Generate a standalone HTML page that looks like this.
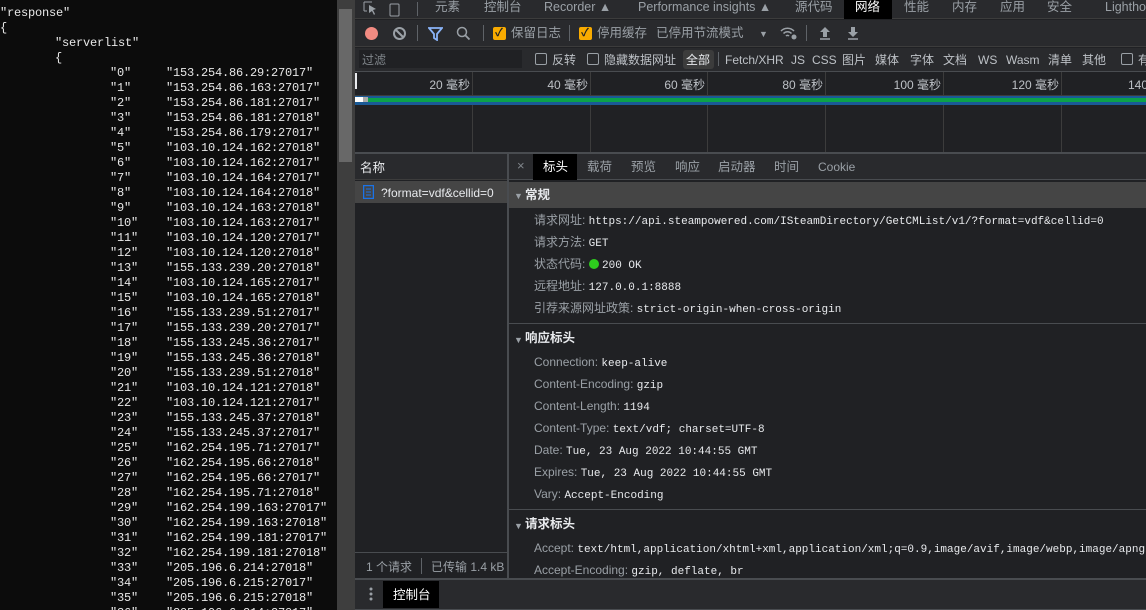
<!DOCTYPE html>
<html><head><meta charset="utf-8"><style>
*{box-sizing:border-box;margin:0;padding:0}
html,body{width:1146px;height:610px;overflow:hidden}
body{background:#202124;font-family:"Liberation Sans","Noto Sans CJK SC",sans-serif;font-size:12px;color:#9aa0a6;position:relative;line-height:16px}
.a{position:absolute;white-space:nowrap;line-height:16px}
#left{position:absolute;left:0;top:0;width:337px;height:610px;overflow:hidden;background:#0c0c0c;color:#e8e8e8;font-family:"Liberation Mono","Noto Sans CJK SC",monospace;font-size:12px;letter-spacing:-0.2px}
#left div{position:absolute;white-space:pre;line-height:15px}
#sb{position:absolute;left:337px;top:0;width:18px;height:610px;background:#3e3e3e}
#thumb{position:absolute;left:339px;top:9px;width:13px;height:153px;background:#686868}
.mono{font-family:"Liberation Mono",monospace;font-size:11px;color:#e8eaed}
.lbl{color:#9aa0a6;font-size:12px}
.tab{position:absolute;top:0;height:19px;line-height:15px;color:#9aa0a6;font-size:12.5px}
.vl{position:absolute;width:1px;background:#3c3c3c}
.cb{position:absolute;width:12px;height:12px;border:1px solid #9aa0a6;border-radius:2px}
.cbo{position:absolute;width:13px;height:13px;background:#f9ab00;border-radius:2px}
.f{position:absolute;top:52px;color:#bdc1c6;white-space:nowrap;line-height:16px}
.dt{position:absolute;top:159px;font-size:12.5px;line-height:16px;white-space:nowrap}
</style></head><body>
<div id="left">
<div style="left:0;top:6px">"response"</div>
<div style="left:0;top:21px">{</div>
<div style="left:55px;top:36px">"serverlist"</div>
<div style="left:55px;top:51px">{</div>
<div style="left:110px;top:66px">"0"     "153.254.86.29:27017"
"1"     "153.254.86.163:27017"
"2"     "153.254.86.181:27017"
"3"     "153.254.86.181:27018"
"4"     "153.254.86.179:27017"
"5"     "103.10.124.162:27018"
"6"     "103.10.124.162:27017"
"7"     "103.10.124.164:27017"
"8"     "103.10.124.164:27018"
"9"     "103.10.124.163:27018"
"10"    "103.10.124.163:27017"
"11"    "103.10.124.120:27017"
"12"    "103.10.124.120:27018"
"13"    "155.133.239.20:27018"
"14"    "103.10.124.165:27017"
"15"    "103.10.124.165:27018"
"16"    "155.133.239.51:27017"
"17"    "155.133.239.20:27017"
"18"    "155.133.245.36:27017"
"19"    "155.133.245.36:27018"
"20"    "155.133.239.51:27018"
"21"    "103.10.124.121:27018"
"22"    "103.10.124.121:27017"
"23"    "155.133.245.37:27018"
"24"    "155.133.245.37:27017"
"25"    "162.254.195.71:27017"
"26"    "162.254.195.66:27018"
"27"    "162.254.195.66:27017"
"28"    "162.254.195.71:27018"
"29"    "162.254.199.163:27017"
"30"    "162.254.199.163:27018"
"31"    "162.254.199.181:27017"
"32"    "162.254.199.181:27018"
"33"    "205.196.6.214:27018"
"34"    "205.196.6.215:27017"
"35"    "205.196.6.215:27018"
"36"    "205.196.6.214:27017"</div>
</div>
<div id="sb"></div><div id="thumb"></div>

<div class="a" style="left:355px;top:0;width:791px;height:19px;background:#292a2d;border-bottom:1px solid #3c3c3c"></div>
<svg class="a" style="left:363px;top:1px" width="40" height="16"><path d="M1 1h8M1 1v9M1 10h3" stroke="#9aa0a6" fill="none"/><path d="M6 4l7 4-3 1 2 4-1 1-2-4-3 2z" fill="#9aa0a6"/><rect x="27" y="3" width="9" height="12" rx="1" stroke="#9aa0a6" fill="none"/></svg>
<div class="vl" style="left:417px;top:2px;height:14px;background:#5f6368"></div>
<div class="tab" style="left:435px">元素</div>
<div class="tab" style="left:484px">控制台</div>
<div class="tab" style="left:544px">Recorder ▲</div>
<div class="tab" style="left:638px">Performance insights ▲</div>
<div class="tab" style="left:795px">源代码</div>
<div class="a" style="left:844px;top:0;width:48px;height:19px;background:#000"></div>
<div class="tab" style="left:855px;color:#fff">网络</div>
<div class="tab" style="left:904px">性能</div>
<div class="tab" style="left:952px">内存</div>
<div class="tab" style="left:1000px">应用</div>
<div class="tab" style="left:1047px">安全</div>
<div class="tab" style="left:1105px">Lighthouse</div>

<div class="a" style="left:355px;top:20px;width:791px;height:27px;background:#292a2d;border-bottom:1px solid #3c3c3c"></div>
<div class="a" style="left:365px;top:27px;width:13px;height:13px;border-radius:50%;background:#f28b82"></div>
<div class="a" style="left:393px;top:27px;width:13px;height:13px;border-radius:50%;border:2px solid #9aa0a6"></div>
<svg class="a" style="left:393px;top:27px" width="13" height="13"><path d="M3 3l7 7" stroke="#9aa0a6" stroke-width="2"/></svg>
<div class="vl" style="left:417px;top:25px;height:16px;background:#5f6368"></div>
<svg class="a" style="left:428px;top:27px" width="15" height="14"><path d="M1 1h13l-5 6v6l-3-2v-4z" fill="none" stroke="#8ab4f8" stroke-width="1.8"/></svg>
<svg class="a" style="left:456px;top:26px" width="15" height="15"><circle cx="6" cy="6" r="4.5" stroke="#9aa0a6" stroke-width="1.5" fill="none"/><path d="M9.5 9.5l4 4" stroke="#9aa0a6" stroke-width="1.8"/></svg>
<div class="vl" style="left:483px;top:25px;height:16px;background:#5f6368"></div>
<div class="cbo" style="left:493px;top:27px"></div><div class="a" style="left:495px;top:25px;color:#202124;font-size:11px;font-weight:bold">✓</div>
<div class="a" style="left:511px;top:25px;font-size:12.5px">保留日志</div>
<div class="vl" style="left:569px;top:25px;height:16px;background:#5f6368"></div>
<div class="cbo" style="left:579px;top:27px"></div><div class="a" style="left:581px;top:25px;color:#202124;font-size:11px;font-weight:bold">✓</div>
<div class="a" style="left:597px;top:25px;font-size:12.5px">停用缓存</div>
<div class="a" style="left:656px;top:25px;font-size:12.5px">已停用节流模式</div>
<div class="a" style="left:759px;top:26px;font-size:9px">▼</div>
<svg class="a" style="left:779px;top:25px" width="20" height="16"><path d="M2 6a9 9 0 0 1 13 0M4.5 8.5a5.5 5.5 0 0 1 8 0M7 11a2 2 0 0 1 3 0" stroke="#9aa0a6" stroke-width="1.5" fill="none"/><circle cx="15" cy="12" r="2.5" fill="#9aa0a6"/></svg>
<div class="vl" style="left:806px;top:25px;height:16px;background:#5f6368"></div>
<svg class="a" style="left:818px;top:26px" width="14" height="14"><path d="M7 1l5 5H9v5H5V6H2z" fill="#9aa0a6"/><path d="M2 13h10" stroke="#9aa0a6" stroke-width="1.5"/></svg>
<svg class="a" style="left:846px;top:26px" width="14" height="14"><path d="M7 11l5-5H9V1H5v5H2z" fill="#9aa0a6"/><path d="M2 13h10" stroke="#9aa0a6" stroke-width="1.5"/></svg>

<div class="a" style="left:355px;top:48px;width:791px;height:24px;background:#292a2d;border-bottom:1px solid #494c50"></div>
<div class="a" style="left:359px;top:50px;width:163px;height:18px;background:#202124"></div>
<div class="a" style="left:362px;top:52px;color:#80868b">过滤</div>
<div class="cb" style="left:535px;top:53px"></div><div class="f" style="left:552px">反转</div>
<div class="cb" style="left:587px;top:53px"></div><div class="f" style="left:604px">隐藏数据网址</div>
<div class="a" style="left:683px;top:50px;width:31px;height:19px;background:#3c3c3c;border-radius:3px"></div>
<div class="f" style="left:686px;color:#e8eaed">全部</div>
<div class="vl" style="left:718px;top:52px;height:14px;background:#5f6368"></div>
<div class="f" style="left:725px">Fetch/XHR</div>
<div class="f" style="left:791px">JS</div>
<div class="f" style="left:812px">CSS</div>
<div class="f" style="left:842px">图片</div>
<div class="f" style="left:875px">媒体</div>
<div class="f" style="left:910px">字体</div>
<div class="f" style="left:943px">文档</div>
<div class="f" style="left:978px">WS</div>
<div class="f" style="left:1006px">Wasm</div>
<div class="f" style="left:1048px">清单</div>
<div class="f" style="left:1082px">其他</div>
<div class="cb" style="left:1121px;top:53px"></div><div class="f" style="left:1138px">有</div>

<div class="a" style="left:355px;top:72px;width:791px;height:24px;border-bottom:1px solid #3c3c3c"></div>
<div class="a" style="left:355px;top:73px;width:2px;height:16px;background:#e8eaed"></div>
<div class="vl" style="left:472px;top:72px;height:81px"></div>
<div class="vl" style="left:590px;top:72px;height:81px"></div>
<div class="vl" style="left:707px;top:72px;height:81px"></div>
<div class="vl" style="left:825px;top:72px;height:81px"></div>
<div class="vl" style="left:943px;top:72px;height:81px"></div>
<div class="vl" style="left:1061px;top:72px;height:81px"></div>
<div class="a" style="left:420px;top:77px;width:50px;text-align:right;color:#bdc1c6">20 毫秒</div>
<div class="a" style="left:538px;top:77px;width:50px;text-align:right;color:#bdc1c6">40 毫秒</div>
<div class="a" style="left:655px;top:77px;width:50px;text-align:right;color:#bdc1c6">60 毫秒</div>
<div class="a" style="left:773px;top:77px;width:50px;text-align:right;color:#bdc1c6">80 毫秒</div>
<div class="a" style="left:885px;top:77px;width:56px;text-align:right;color:#bdc1c6">100 毫秒</div>
<div class="a" style="left:1003px;top:77px;width:56px;text-align:right;color:#bdc1c6">120 毫秒</div>
<div class="a" style="left:1128px;top:77px;color:#bdc1c6">140</div>
<div class="a" style="left:355px;top:96px;width:791px;height:9px;background:#1a5a96"></div>
<div class="a" style="left:355px;top:98px;width:791px;height:4px;background:#0ca14a"></div>
<div class="a" style="left:355px;top:97px;width:13px;height:5px;background:#aaa"></div>
<div class="a" style="left:355px;top:97px;width:8px;height:5px;background:#fff"></div>
<div class="a" style="left:355px;top:152px;width:791px;height:2px;background:#494c50"></div>

<div class="a" style="left:355px;top:154px;width:153px;height:26px;background:#292a2d;border-bottom:1px solid #3c3c3c"></div>
<div class="a" style="left:360px;top:160px;color:#e8eaed;font-size:12.5px">名称</div>
<div class="a" style="left:355px;top:181px;width:152px;height:22px;background:#454545"></div>
<svg class="a" style="left:363px;top:185px" width="11" height="14"><rect x="0.5" y="0.5" width="10" height="13" fill="none" stroke="#1a73e8" stroke-width="1.5"/><path d="M3 4h5M3 7h5M3 10h5" stroke="#1a73e8"/></svg>
<div class="a" style="left:381px;top:185px;color:#e8eaed">?format=vdf&amp;cellid=0</div>
<div class="a" style="left:507px;top:154px;width:2px;height:424px;background:#494c50"></div>
<div class="a" style="left:355px;top:552px;width:153px;height:1px;background:#494c50"></div>
<div class="a" style="left:366px;top:559px;color:#9aa0a6">1 个请求</div>
<div class="vl" style="left:421px;top:558px;height:16px;background:#5f6368"></div>
<div class="a" style="left:431px;top:559px;color:#9aa0a6">已传输 1.4 kB</div>

<div class="a" style="left:509px;top:154px;width:637px;height:26px;background:#292a2d;border-bottom:1px solid #494c50"></div>
<div class="a" style="left:517px;top:158px;color:#80868b;font-size:13px">×</div>
<div class="a" style="left:533px;top:154px;width:44px;height:26px;background:#000"></div>
<div class="dt" style="left:543px;color:#fff">标头</div>
<div class="dt" style="left:587px">载荷</div>
<div class="dt" style="left:631px">预览</div>
<div class="dt" style="left:675px">响应</div>
<div class="dt" style="left:718px">启动器</div>
<div class="dt" style="left:774px">时间</div>
<div class="dt" style="left:818px;font-size:12px">Cookie</div>

<div class="a" style="left:509px;top:182px;width:637px;height:26px;background:#454545"></div>
<div class="a" style="left:514px;top:188px;color:#9aa0a6;font-size:9px">▼</div>
<div class="a" style="left:525px;top:187px;color:#e8eaed;font-weight:bold;font-size:12.5px">常规</div>
<div class="a" style="left:534px;top:212px"><span class="lbl">请求网址: </span><span class="mono">https://api.steampowered.com/ISteamDirectory/GetCMList/v1/?format=vdf&amp;cellid=0</span></div>
<div class="a" style="left:534px;top:234px"><span class="lbl">请求方法: </span><span class="mono">GET</span></div>
<div class="a" style="left:534px;top:256px"><span class="lbl">状态代码: </span><span style="display:inline-block;width:10px;height:10px;border-radius:50%;background:#2ecc1e;vertical-align:-1px"></span> <span class="mono">200 OK</span></div>
<div class="a" style="left:534px;top:278px"><span class="lbl">远程地址: </span><span class="mono">127.0.0.1:8888</span></div>
<div class="a" style="left:534px;top:300px"><span class="lbl">引荐来源网址政策: </span><span class="mono">strict-origin-when-cross-origin</span></div>
<div class="a" style="left:509px;top:323px;width:637px;height:1px;background:#494c50"></div>

<div class="a" style="left:514px;top:332px;font-size:9px">▼</div>
<div class="a" style="left:525px;top:330px;color:#e8eaed;font-weight:bold;font-size:12.5px">响应标头</div>
<div class="a" style="left:534px;top:354px"><span class="lbl">Connection: </span><span class="mono">keep-alive</span></div>
<div class="a" style="left:534px;top:376px"><span class="lbl">Content-Encoding: </span><span class="mono">gzip</span></div>
<div class="a" style="left:534px;top:398px"><span class="lbl">Content-Length: </span><span class="mono">1194</span></div>
<div class="a" style="left:534px;top:420px"><span class="lbl">Content-Type: </span><span class="mono">text/vdf; charset=UTF-8</span></div>
<div class="a" style="left:534px;top:442px"><span class="lbl">Date: </span><span class="mono">Tue, 23 Aug 2022 10:44:55 GMT</span></div>
<div class="a" style="left:534px;top:464px"><span class="lbl">Expires: </span><span class="mono">Tue, 23 Aug 2022 10:44:55 GMT</span></div>
<div class="a" style="left:534px;top:486px"><span class="lbl">Vary: </span><span class="mono">Accept-Encoding</span></div>
<div class="a" style="left:509px;top:509px;width:637px;height:1px;background:#494c50"></div>

<div class="a" style="left:514px;top:518px;font-size:9px">▼</div>
<div class="a" style="left:525px;top:516px;color:#e8eaed;font-weight:bold;font-size:12.5px">请求标头</div>
<div class="a" style="left:534px;top:540px"><span class="lbl">Accept: </span><span class="mono">text/html,application/xhtml+xml,application/xml;q=0.9,image/avif,image/webp,image/apng</span></div>
<div class="a" style="left:534px;top:562px"><span class="lbl">Accept-Encoding: </span><span class="mono">gzip, deflate, br</span></div>

<div class="a" style="left:355px;top:578px;width:791px;height:32px;background:#292a2d;border-top:2px solid #494c50;border-bottom:1px solid #494c50"></div>
<svg class="a" style="left:369px;top:586px" width="4" height="16"><circle cx="2" cy="3" r="1.5" fill="#9aa0a6"/><circle cx="2" cy="8" r="1.5" fill="#9aa0a6"/><circle cx="2" cy="13" r="1.5" fill="#9aa0a6"/></svg>
<div class="a" style="left:383px;top:581px;width:56px;height:27px;background:#000"></div>
<div class="a" style="left:393px;top:587px;color:#fff;font-size:12.5px">控制台</div>
</body></html>
